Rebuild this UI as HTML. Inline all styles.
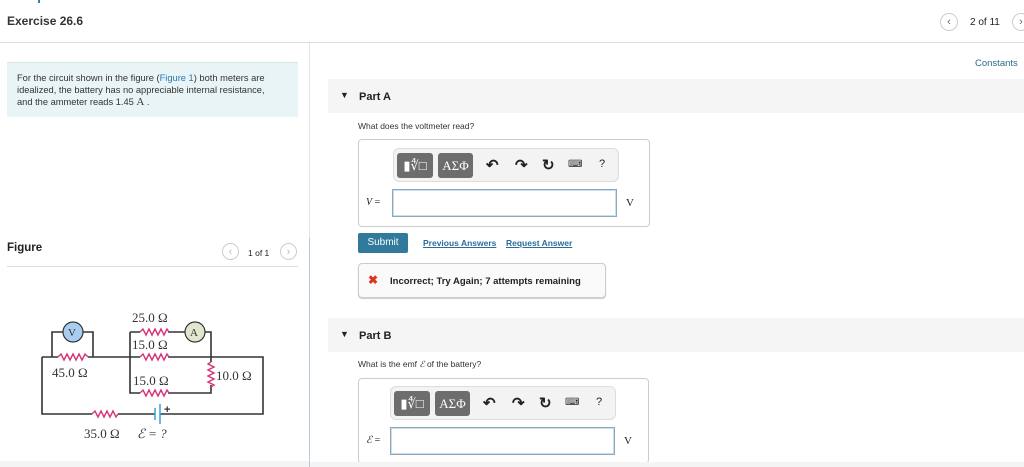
<!DOCTYPE html>
<html><head><meta charset="utf-8"><style>
*{margin:0;padding:0;box-sizing:border-box}
body{width:1024px;height:467px;position:relative;overflow:hidden;background:#fff;font-family:"Liberation Sans",Arial,sans-serif;color:#222}
.a{position:absolute}
.circ{border:1px solid #ccc;border-radius:50%;width:18px;height:18px;color:#666;font-size:11px;text-align:center;line-height:16px}
.tb{position:absolute;border:1px solid #ddd;border-radius:6px;background:#f3f3f3;height:34px;width:226px}
.tb .b{position:absolute;top:4px;height:25px;background:#6d6d6d;border-radius:3px;color:#fff;font-family:"Liberation Serif",serif;font-size:13px;line-height:25px;text-align:center}
.tb .i{position:absolute;top:7px;font-size:15px;font-weight:bold;color:#222}
.box{position:absolute;border:1px solid #ccc;border-radius:4px;background:#fff}
.inp{position:absolute;border:1px solid #8ab;box-shadow:inset 0 0 0 1px #cde;background:#fff}
.hdr{position:absolute;left:328px;width:696px;height:34px;background:#f5f5f5;font-size:11px;font-weight:bold}
</style></head><body>
<div class="a" style="top:0;height:3px;background:#3a7fa8;left:38px;width:2px"></div>
<div class="a" style="left:7px;top:14px;font-size:12px;font-weight:bold;color:#333">Exercise 26.6</div>
<div class="a circ" style="left:940px;top:13px">&#8249;</div>
<div class="a" style="left:970px;top:17px;font-size:10px">2 of 11</div>
<div class="a circ" style="left:1012px;top:13px">&#8250;</div>
<div class="a" style="left:0;top:42px;width:1024px;height:1px;background:#ddd"></div>
<div class="a" style="left:309px;top:43px;width:1px;height:424px;background:#e3e3e3"></div>
<div class="a" style="left:309px;top:238px;width:1px;height:229px;background:#b8c8dc"></div>
<div class="a" style="left:975px;top:58px;font-size:9.5px;color:#2b6c8c">Constants</div>
<div class="a" style="left:7px;top:62px;width:291px;height:55px;background:#e9f4f7;border-top:1px solid #d8e4e8;padding:9px 10px 0 10px;font-size:9.3px;line-height:12px;color:#333"><span style="display:block;width:262px">For the circuit shown in the figure (<span style="color:#2b7ab0">Figure 1</span>) both meters are idealized, the battery has no appreciable internal resistance, and the ammeter reads 1.45 <span style="font-family:'Liberation Serif',serif;font-size:11px">A</span> .</span></div>
<div class="a" style="left:7px;top:242px;font-size:11.5px;font-weight:bold">Figure</div>
<div class="a circ" style="left:222px;top:243px;width:17px;height:17px;color:#bbb">&#8249;</div>
<div class="a" style="left:248px;top:248px;font-size:8.5px">1 of 1</div>
<div class="a circ" style="left:280px;top:243px;width:17px;height:17px;color:#bbb">&#8250;</div>
<div class="a" style="left:7px;top:266px;width:291px;height:1px;background:#ddd"></div>
<svg class="a" style="left:0;top:290px" width="300" height="170" viewBox="0 290 300 170">
<g fill="none" stroke="#333" stroke-width="1.6">
<path d="M42 357H58M88 357H130M42 357V414H92M118 414H155M160 414H263V357H211M130 332V393H140M168 393H211V385M211 362V357M130 357H140M168 357H211V332H205M185 332H168M140 332H130M52 357V332H63M83 332H93V357"/>
</g>
<g fill="none" stroke="#d6337a" stroke-width="1.4">
<path d="M58 357l3-3 3 6 3-6 3 6 3-6 3 6 3-6 3 6 3-6 3 3"/>
<path d="M140 332l3-3 3 6 3-6 3 6 3-6 3 6 3-6 3 6 3-6 2 3"/>
<path d="M140 357l3-3 3 6 3-6 3 6 3-6 3 6 3-6 3 6 3-6 2 3"/>
<path d="M140 393l3-3 3 6 3-6 3 6 3-6 3 6 3-6 3 6 3-6 2 3"/>
<path d="M92 414l3-3 3 6 3-6 3 6 3-6 3 6 3-6 3 6 2-3"/>
<path d="M211 362l-3 2 6 3-6 3 6 3-6 3 6 3-6 3 6 3-3 2"/>
</g>
<circle cx="73" cy="332" r="10" fill="#a9cdee" stroke="#333" stroke-width="1.2"/>
<circle cx="195" cy="332" r="10" fill="#dfe8cf" stroke="#333" stroke-width="1.2"/>
<path d="M155 408V420M160 404V424" stroke="#3aa0d8" stroke-width="1.5"/>
<g font-family="Liberation Serif,serif" font-size="13" fill="#333">
<text x="68" y="336" font-size="11">V</text><text x="190" y="336" font-size="11">A</text>
<text x="132" y="322">25.0 Ω</text><text x="132" y="349">15.0 Ω</text>
<text x="52" y="377">45.0 Ω</text><text x="133" y="385">15.0 Ω</text>
<text x="216" y="380">10.0 Ω</text><text x="164" y="413" font-size="11" font-weight="bold" font-family="Liberation Sans">+</text>
<text x="84" y="438">35.0 Ω</text><text x="137" y="438" font-style="italic">ℰ = ?</text>
</g></svg>
<div class="a" style="left:0;top:461px;width:309px;height:6px;background:#f4f4f4"></div>

<div class="hdr" style="top:79px"><span class="a" style="left:12px;top:11px;font-size:9px">▼</span><span class="a" style="left:31px;top:12px">Part A</span></div>
<div class="a" style="left:358px;top:121px;font-size:8.5px;color:#333">What does the voltmeter read?</div>
<div class="box" style="left:358px;top:139px;width:292px;height:88px"></div>
<div class="tb" style="left:393px;top:148px"><div class="b" style="left:3px;width:36px">▮∜□</div><div class="b" style="left:44px;width:35px">ΑΣΦ</div><span class="i" style="left:92px">↶</span><span class="i" style="left:121px">↷</span><span class="i" style="left:148px">↻</span><span class="i" style="left:174px;font-size:10px;top:10px;font-weight:normal">⌨</span><span class="i" style="left:205px;font-size:11px;top:9px;font-weight:normal">?</span></div>
<div class="a" style="left:366px;top:197px;font-size:10px;font-family:'Liberation Serif',serif"><i>V</i> =</div>
<div class="inp" style="left:392px;top:189px;width:225px;height:28px"></div>
<div class="a" style="left:626px;top:197px;font-size:11px;font-family:'Liberation Serif',serif">V</div>
<div class="a" style="left:358px;top:233px;width:50px;height:20px;background:#317a9c;border-radius:2px;color:#fff;font-size:10px;text-align:center;line-height:20px">Submit</div>
<div class="a" style="left:423px;top:238px;font-size:8.5px;font-weight:bold;color:#2b6c9c;text-decoration:underline">Previous Answers</div>
<div class="a" style="left:506px;top:238px;font-size:8.5px;font-weight:bold;color:#2b6c9c;text-decoration:underline">Request Answer</div>
<div class="box" style="left:358px;top:263px;width:248px;height:35px;background:#fafafa;box-shadow:0 1px 1px #ccc"><span class="a" style="left:9px;top:9px;color:#d32;font-weight:bold;font-size:12px">✖</span><span class="a" style="left:31px;top:12px;font-size:9.5px;font-weight:bold">Incorrect; Try Again; 7 attempts remaining</span></div>

<div class="hdr" style="top:318px"><span class="a" style="left:12px;top:11px;font-size:9px">▼</span><span class="a" style="left:31px;top:12px">Part B</span></div>
<div class="a" style="left:358px;top:359px;font-size:8.5px;color:#333">What is the emf <i style="font-family:'Liberation Serif',serif">ℰ</i> of the battery?</div>
<div class="box" style="left:358px;top:378px;width:291px;height:86px"></div>
<div class="tb" style="left:390px;top:386px"><div class="b" style="left:3px;width:36px">▮∜□</div><div class="b" style="left:44px;width:35px">ΑΣΦ</div><span class="i" style="left:92px">↶</span><span class="i" style="left:121px">↷</span><span class="i" style="left:148px">↻</span><span class="i" style="left:174px;font-size:10px;top:10px;font-weight:normal">⌨</span><span class="i" style="left:205px;font-size:11px;top:9px;font-weight:normal">?</span></div>
<div class="a" style="left:366px;top:435px;font-size:10px;font-family:'Liberation Serif',serif"><i>ℰ</i> =</div>
<div class="inp" style="left:390px;top:427px;width:225px;height:28px"></div>
<div class="a" style="left:624px;top:435px;font-size:11px;font-family:'Liberation Serif',serif">V</div>
<div class="a" style="left:310px;top:462px;width:714px;height:5px;background:#f4f4f4"></div>
</body></html>
